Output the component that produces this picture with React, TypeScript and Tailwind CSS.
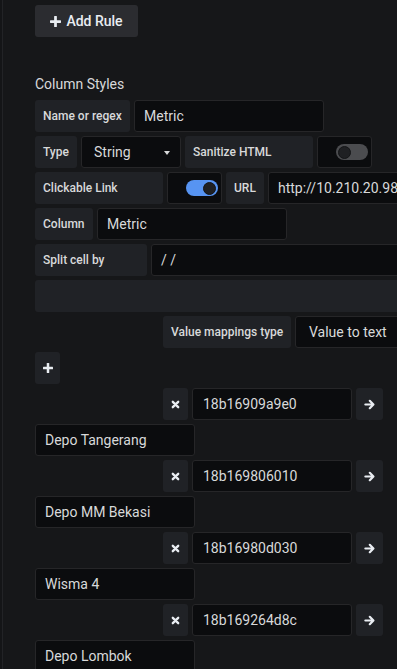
import React from 'react';

const label = 'h-8 shrink-0 flex items-center px-2 rounded-[3px] bg-[#202226] text-xs font-medium text-[#d8d9da] whitespace-nowrap';
const input = 'h-8 shrink-0 flex items-center pl-[9px] rounded-[3px] bg-[#0b0c0e] border border-[#262628] text-sm text-[#d8d9da] whitespace-nowrap overflow-hidden';
const iconBtn = 'h-8 shrink-0 flex items-center justify-center rounded-[3px] bg-[#202226] text-[#e9edf2]';
const row = 'flex gap-1 shrink-0';

function PlusIcon({ size = 11 }: { size?: number }) {
  return (
    <svg width={size} height={size} viewBox="0 0 12 12" fill="currentColor">
      <rect x="4.5" y="0" width="3" height="12" rx="0.6" />
      <rect x="0" y="4.5" width="12" height="3" rx="0.6" />
    </svg>
  );
}

function TimesIcon() {
  return (
    <svg width="9" height="9" viewBox="0 0 10 10" stroke="currentColor" strokeWidth="2.6" strokeLinecap="round">
      <path d="M2 2 L8 8 M8 2 L2 8" />
    </svg>
  );
}

function ArrowIcon() {
  return (
    <svg width="11" height="11" viewBox="0 0 12 12" fill="none" stroke="currentColor" strokeWidth="2.4" strokeLinecap="round" strokeLinejoin="round">
      <path d="M1.5 6 H10 M6.3 2 L10.3 6 L6.3 10" />
    </svg>
  );
}

function Switch({ on }: { on: boolean }) {
  return (
    <div className="h-8 w-[55px] shrink-0 flex items-center justify-end pr-[3px] rounded-[3px] bg-[#0b0c0e] border border-[#262628]">
      <div className={`w-[32px] h-[16px] rounded-full flex items-center px-[2px] ${on ? 'bg-[#5794f2] justify-end' : 'bg-[#4b4c4f] justify-start'}`}>
        <div className="w-[13px] h-[13px] rounded-full bg-[#1f2023] border border-[#141517]" />
      </div>
    </div>
  );
}

const mappings = [
  { value: '18b16909a9e0', text: 'Depo Tangerang' },
  { value: '18b169806010', text: 'Depo MM Bekasi' },
  { value: '18b16980d030', text: 'Wisma 4' },
  { value: '18b169264d8c', text: 'Depo Lombok' },
];

export default function App() {
  return (
    <div className="w-[397px] h-[669px] overflow-hidden bg-[#161719] flex font-['Roboto',sans-serif]">
      <div className="w-[2px] shrink-0 bg-[#141517]" />
      <div className="w-px shrink-0 bg-[#222326]" />
      <div className="pl-[32px] pt-[5px] flex flex-col gap-1 min-w-0">
        {/* Add rule */}
        <button className="h-8 w-[103px] shrink-0 flex items-center justify-center gap-[5px] rounded-[3px] bg-[#2b2c30] text-sm font-medium text-[#e9edf2]">
          <PlusIcon />
          Add Rule
        </button>

        <div className="mt-[33px] mb-[2px] h-5 shrink-0 leading-5 text-sm text-[#d8d9da]">Column Styles</div>

        {/* Name or regex */}
        <div className={row}>
          <div className={`${label} w-[95px]`}>Name or regex</div>
          <div className={`${input} w-[190px]`}>Metric</div>
        </div>

        {/* Type / Sanitize */}
        <div className={row}>
          <div className={`${label} w-[42px]`}>Type</div>
          <div className={`${input} w-[100px] pl-[12px] pr-[10px] justify-between`}>
            <span>String</span>
            <span className="w-0 h-0 border-l-[3.5px] border-r-[3.5px] border-t-[4px] border-l-transparent border-r-transparent border-t-[#d8d9da] mt-[2px]" />
          </div>
          <div className={`${label} w-[128px]`}>Sanitize HTML</div>
          <Switch on={false} />
        </div>

        {/* Clickable link / URL */}
        <div className={row}>
          <div className={`${label} w-[128px]`}>Clickable Link</div>
          <Switch on={true} />
          <div className={`${label} w-[38px]`}>URL</div>
          <div className={`${input} w-[200px]`}>http://10.210.20.98:3000/d/</div>
        </div>

        {/* Column */}
        <div className={row}>
          <div className={`${label} w-[58px]`}>Column</div>
          <div className={`${input} w-[190px]`}>Metric</div>
        </div>

        {/* Split */}
        <div className={row}>
          <div className={`${label} w-[112px]`}>Split cell by</div>
          <div className={`${input} w-[300px]`}>/ /</div>
        </div>

        <div className="h-8 w-[400px] shrink-0 rounded-[3px] bg-[#202226]" />

        {/* Value mappings type */}
        <div className={`${row} pl-[128px]`}>
          <div className={`${label} w-[128px]`}>Value mappings type</div>
          <div className={`${input} w-[140px] pl-[13px]`}>Value to text</div>
        </div>

        <button className={`${iconBtn} w-[25px]`}>
          <PlusIcon size={10} />
        </button>

        {mappings.map((m) => (
          <React.Fragment key={m.value}>
            <div className={`${row} pl-[128px]`}>
              <button className={`${iconBtn} w-[25px]`}>
                <TimesIcon />
              </button>
              <div className={`${input} w-[160px] pl-[10px]`}>{m.value}</div>
              <button className={`${iconBtn} w-[27px]`}>
                <ArrowIcon />
              </button>
            </div>
            <div className={row}>
              <div className={`${input} w-[160px]`}>{m.text}</div>
            </div>
          </React.Fragment>
        ))}
      </div>
    </div>
  );
}
